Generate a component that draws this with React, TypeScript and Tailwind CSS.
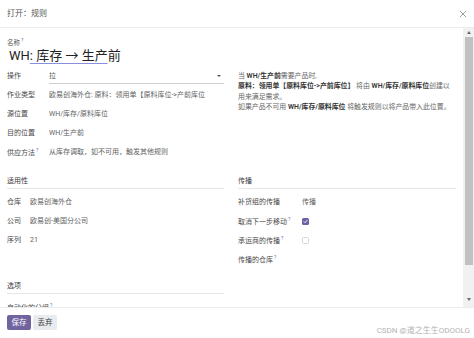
import type { ReactNode } from "react";

function Q() {
  return <span className="ml-[1px] align-super text-[5px] text-[#5a6aa8]">?</span>;
}

function Row({ label, help, w, children }: { label: string; help?: boolean; w: string; children?: ReactNode }) {
  return (
    <div className="flex h-[19px] items-center">
      <div className={`${w} shrink-0 whitespace-nowrap text-[#4a4a4a]`}>
        {label}
        {help && <Q />}
      </div>
      <div className="min-w-0 flex-1 overflow-hidden whitespace-nowrap text-[#5f5f5f]">{children}</div>
    </div>
  );
}

function Heading({ children }: { children: ReactNode }) {
  return (
    <div className="h-[14px] border-b border-[#e6e6e6] leading-[13px] text-[#3a3a3a]">{children}</div>
  );
}

function Check({ on }: { on?: boolean }) {
  return on ? (
    <div className="flex h-[7px] w-[7px] items-center justify-center rounded-[1.5px] bg-[#6f5fa6]">
      <svg width="5" height="5" viewBox="0 0 10 10" fill="none">
        <path d="M2 5.2 L4.2 7.4 L8.2 2.8" stroke="white" strokeWidth="1.8" strokeLinecap="round" strokeLinejoin="round" />
      </svg>
    </div>
  ) : (
    <div className="h-[7px] w-[7px] rounded-[1.5px] border border-[#d6d6d6] bg-white" />
  );
}

export default function App() {
  return (
    <div className="flex h-[338px] w-[474px] flex-col overflow-hidden bg-white font-['Roboto','Noto_Sans_CJK_SC',sans-serif] text-[7px]">
      <header className="flex h-[28px] shrink-0 items-center justify-between border-b border-[#ececec] px-[7px]">
        <span className="text-[8px] text-[#555]">打开：规则</span>
        <svg width="8" height="8" viewBox="0 0 10 10" className="text-[#777]">
          <path d="M1 1 L9 9 M9 1 L1 9" stroke="currentColor" strokeWidth="0.9" />
        </svg>
      </header>

      <div className="flex h-[279px] shrink-0">
        <div className="min-w-0 flex-1 overflow-hidden pl-[7px] pr-[7px] pt-[7px]">
          <div className="h-[10px] text-[6.5px] leading-[10px] text-[#555]">
            名称
            <Q />
          </div>
          <div className="mt-[1px] h-[20px] pl-[2px] text-[13px] leading-[20px] text-[#222]">
            WH
            <span className="underline decoration-[#8a8fdc] decoration-1 underline-offset-[3px]">: 库存 → 生产</span>
            前
          </div>

          <div className="mt-[1px] grid grid-cols-[217px_218px] gap-x-[14px]">
            <div>
              <Row label="操作" w="w-[42px]">
                <div className="flex h-[14px] items-center justify-between border-b border-[#cfcfcf] pr-[3px]">
                  <span>拉</span>
                  <div className="h-0 w-0 border-x-[2px] border-t-[2.5px] border-x-transparent border-t-[#555]" />
                </div>
              </Row>
              <Row label="作业类型" w="w-[42px]">
                <div className="w-[156px] overflow-hidden">欧易创海外仓: 原料：领用单【原料库位-&gt;产前库位】</div>
              </Row>
              <Row label="源位置" w="w-[42px]">WH/库存/原料库位</Row>
              <Row label="目的位置" w="w-[42px]">WH/生产前</Row>
              <Row label="供应方法" help w="w-[42px]">从库存调取，如不可用，触发其他规则</Row>
            </div>
            <div className="whitespace-nowrap pt-[3.5px] text-[6.9px] leading-[10.6px] text-[#666]">
              当 <b className="font-semibold text-[#333]">WH/生产前</b>需要产品时,
              <br />
              <b className="font-semibold text-[#333]">原料：领用单【原料库位-&gt;产前库位】</b> 将由{" "}
              <b className="font-semibold text-[#333]">WH/库存/原料库位</b>创建以
              <br />
              用来满足需求。
              <br />
              如果产品不可用 <b className="font-semibold text-[#333]">WH/库存/原料库位</b> 将触发规则以将产品带入此位置。
            </div>
          </div>

          <div className="mt-[13px] grid grid-cols-[217px_218px] gap-x-[14px]">
            <div>
              <Heading>适用性</Heading>
              <div className="mt-[4px]">
                <Row label="仓库" w="w-[23px]">欧易创海外仓</Row>
                <Row label="公司" w="w-[23px]">欧易创-美国分公司</Row>
                <Row label="序列" w="w-[23px]">21</Row>
              </div>
            </div>
            <div>
              <Heading>传播</Heading>
              <div className="mt-[4px]">
                <Row label="补货组的传播" w="w-[64px]">传播</Row>
                <Row label="取消下一步移动" help w="w-[64px]">
                  <Check on />
                </Row>
                <Row label="承运商的传播" help w="w-[64px]">
                  <Check />
                </Row>
                <Row label="传播的仓库" help w="w-[64px]" />
              </div>
            </div>
          </div>

          <div className="mt-[11px] w-[217px]">
            <Heading>选项</Heading>
            <div className="mt-[4px]">
              <Row label="自动化的分组" help w="w-[64px]" />
            </div>
          </div>
        </div>

        <div className="flex w-[11px] shrink-0 flex-col items-center bg-[#f1f1f1]">
          <div className="flex h-[9px] items-center">
            <div className="h-0 w-0 border-x-[2.5px] border-b-[3px] border-x-transparent border-b-[#6a6a6a]" />
          </div>
          <div className="h-[228px] w-[8px] bg-[#c1c1c1]" />
          <div className="flex-1" />
          <div className="mb-[3px] flex h-[9px] items-center">
            <div className="h-0 w-0 border-x-[2.5px] border-t-[3px] border-x-transparent border-t-[#6a6a6a]" />
          </div>
        </div>
      </div>

      <footer className="relative flex flex-1 items-start gap-[2px] border-t border-[#ececec] px-[7px] pt-[7px]">
        <button className="h-[15px] w-[24px] rounded-[2px] bg-[#71639e] text-[7.5px] text-white">保存</button>
        <button className="h-[15px] w-[24px] rounded-[2px] bg-[#e9ecef] text-[7.5px] text-[#444]">丢弃</button>
        <span className="absolute bottom-[2px] right-[4px] text-[8px] leading-[10px] text-[#b4b4b4]">
          CSDN @道之生生ODOOLG
        </span>
      </footer>
    </div>
  );
}
